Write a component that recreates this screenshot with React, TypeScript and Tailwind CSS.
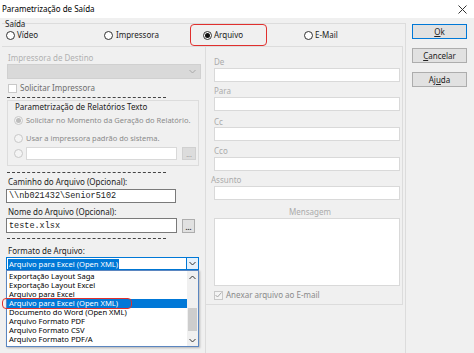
import React from "react";

const FORMATS = [
  "Exportação Layout Saga",
  "Exportação Layout Excel",
  "Arquivo para Excel",
  "Arquivo para Excel (Open XML)",
  "Documento do Word (Open XML)",
  "Arquivo Formato PDF",
  "Arquivo Formato CSV",
  "Arquivo Formato PDF/A",
];

function Radio({ checked, disabled }: { checked?: boolean; disabled?: boolean }) {
  return (
    <span
      className={`w-[9px] h-[9px] rounded-full border flex items-center justify-center shrink-0 ${
        disabled ? "border-[#c8c8c8] bg-[#f4f4f4]" : "border-[#333] bg-white"
      }`}
    >
      {checked && (
        <span className={`w-[5px] h-[5px] rounded-full ${disabled ? "bg-[#bcbcbc]" : "bg-[#111]"}`} />
      )}
    </span>
  );
}

function Chevron({ up, color = "#333" }: { up?: boolean; color?: string }) {
  return (
    <svg width="7" height="5" viewBox="0 0 7 5">
      <path d={up ? "M0.5 4 L3.5 1 L6.5 4" : "M0.5 1 L3.5 4 L6.5 1"} fill="none" stroke={color} strokeWidth="1" />
    </svg>
  );
}

function Field({ className = "" }: { className?: string }) {
  return <div className={`bg-white border border-[#d9d9d9] ${className}`} />;
}

function Dashed({ className = "" }: { className?: string }) {
  return <div className={`border-t border-dashed border-[#444] w-[159px] ml-[5px] ${className}`} />;
}

export default function App() {
  return (
    <div className="w-[474px] h-[353px] overflow-hidden whitespace-nowrap bg-[#f0f0f0] font-['Noto_Sans',sans-serif] text-[8px] leading-[10px] text-[#222]">
      {/* title bar */}
      <div className="h-[18px] bg-white flex items-center justify-between pl-[2px] pr-[7px]">
        <span className="text-[8px] text-black">Parametrização de Saída</span>
        <svg width="9" height="9" viewBox="0 0 9 9">
          <path d="M0.5 0.5 L8.5 8.5 M8.5 0.5 L0.5 8.5" stroke="#333" strokeWidth="1" />
        </svg>
      </div>

      <div className="flex">
        {/* Saída group */}
        <div className="ml-[2px] w-[404px] h-[335px] mt-[5px] border-t border-r border-[#dcdcdc] flex flex-col">
          <div className="ml-[3px] -mt-[5px] h-[10px] text-[#222]">Saída</div>
          <div className="flex items-center h-[12px] pl-[4px]">
            <div className="w-[98px] flex items-center gap-[2px]">
              <Radio /> Vídeo
            </div>
            <div className="w-[99px] flex items-center gap-[3px]">
              <Radio /> Impressora
            </div>
            <div className="w-[101px] relative flex items-center gap-[2px]">
              <span className="absolute -left-[13px] -top-[6px] w-[77px] h-[22px] border-[1.5px] border-[#e0302e] rounded-[4px]" />
              <Radio checked /> Arquivo
            </div>
            <div className="flex items-center gap-[2px]">
              <Radio /> E-Mail
            </div>
          </div>

          <div className="flex mt-[5px] flex-1">
            {/* left panel */}
            <div className="w-[203px] border-t border-[#dcdcdc] flex flex-col">
              <div className="ml-[6px] mt-[6px] text-[#b0b0b0]">Impressora de Destino</div>
              <div className="ml-[5px] mt-[1px] w-[194px] h-[15px] bg-[#d9d9d9] border border-[#d0d0d0] flex items-center justify-end pr-[4px]">
                <Chevron color="#a8a8a8" />
              </div>
              <div className="ml-[6px] mt-[4px] flex items-center gap-[3px] text-[#6e6e6e]">
                <span className="w-[9px] h-[9px] bg-white border border-[#c8c8c8]" />
                Solicitar Impressora
              </div>
              <Dashed className="mt-[4px]" />

              <div className="ml-[5px] mt-[2px] w-[192px] border border-[#dcdcdc] flex flex-col pb-[5px]">
                <div className="ml-[7px] mt-[1px] text-[#222]">Parametrização de Relatórios Texto</div>
                <div className="ml-[6px] mt-[3px] flex items-center gap-[3px] text-[#8a8a8a] text-[7.5px]">
                  <Radio checked disabled /> Solicitar no Momento da Geração do Relatório.
                </div>
                <div className="ml-[6px] mt-[8px] flex items-center gap-[3px] text-[#8a8a8a] text-[7.5px]">
                  <Radio disabled /> Usar a impressora padrão do sistema.
                </div>
                <div className="ml-[6px] mt-[4px] flex items-center gap-[3px]">
                  <Radio disabled />
                  <Field className="w-[151px] h-[13px]" />
                  <div className="ml-[2px] w-[14px] h-[13px] bg-[#dcdcdc] border border-[#d0d0d0] flex items-end justify-center text-[#999] text-[7px] leading-[8px]">
                    ...
                  </div>
                </div>
              </div>

              <Dashed className="mt-[6px]" />
              <div className="ml-[6px] mt-[4px]">Caminho do Arquivo (Opcional):</div>
              <div className="ml-[4px] mt-[2px] w-[170px] h-[14px] bg-white border border-[#7a7a7a] flex items-center pl-[2px] font-['Liberation_Mono',monospace] text-[8.5px] text-[#222]">
                \\nb021432\Senior5102
              </div>
              <div className="ml-[6px] mt-[4px]">Nome do Arquivo (Opcional):</div>
              <div className="ml-[4px] mt-[1px] flex items-center gap-[5px]">
                <div className="w-[171px] h-[15px] bg-white border border-[#7a7a7a] flex items-center pl-[2px] font-['Liberation_Mono',monospace] text-[8.5px] text-[#222]">
                  teste.xlsx
                </div>
                <div className="w-[13px] h-[14px] bg-[#e1e1e1] border border-[#adadad] flex items-end justify-center font-bold text-[7px] leading-[9px]">
                  ...
                </div>
              </div>
              <Dashed className="mt-[5px]" />
              <div className="ml-[6px] mt-[7px]">Formato de Arquivo:</div>

              <div className="ml-[4px] mt-[1px] w-[193px] h-[13px] bg-white border border-[#0078d7] flex items-center pl-[1px] pr-0">
                <span className="bg-[#0078d7] text-white px-[1px] leading-[10px] text-[7.6px]">Arquivo para Excel (Open XML)</span>
                <span className="ml-auto w-[12px] h-[11px] bg-[#e5f1fb] border-l border-[#0078d7] flex items-center justify-center">
                  <Chevron />
                </span>
              </div>
              <div className="ml-[4px] w-[193px] h-[77px] bg-white border border-[#5b86c0] shadow-[1px_1px_2px_rgba(0,0,0,0.25)] flex">
                <div className="flex-1 flex flex-col py-[1px] relative">
                  {FORMATS.map((f, i) => (
                    <div
                      key={f}
                      className={`h-[9px] leading-[9px] pl-[2px] text-[7.6px] ${
                        i === 3 ? "bg-[#0078d7] text-white" : "text-black"
                      }`}
                    >
                      {f}
                    </div>
                  ))}
                  <span className="absolute -left-[5px] top-[27px] w-[130px] h-[11px] border-[1.5px] border-[#e0302e] rounded-[4px]" />
                </div>
                <div className="w-[11px] bg-[#f0f0f0] flex flex-col items-center">
                  <div className="h-[12px] flex items-center">
                    <Chevron up />
                  </div>
                  <div className="mt-[25px] w-[9px] h-[23px] bg-[#cdcdcd]" />
                  <div className="mt-auto h-[12px] flex items-center">
                    <Chevron />
                  </div>
                </div>
              </div>
            </div>

            {/* right panel */}
            <div className="w-[198px] flex flex-col border-l border-[#dcdcdc]">
              <div className="h-[259px] border-t border-b border-r border-[#dcdcdc] flex flex-col">
                <div className="ml-[8px] mt-[10px] text-[#ababab]">De</div>
                <Field className="ml-[8px] mt-[1px] w-[186px] h-[14px]" />
                <div className="ml-[8px] mt-[4px] text-[#ababab]">Para</div>
                <Field className="ml-[8px] mt-[1px] w-[186px] h-[14px]" />
                <div className="ml-[8px] mt-[6px] text-[#ababab]">Cc</div>
                <Field className="ml-[8px] w-[186px] h-[14px]" />
                <div className="ml-[8px] mt-[5px] text-[#ababab]">Cco</div>
                <Field className="ml-[8px] mt-[1px] w-[186px] h-[14px]" />
                <div className="ml-[5px] mt-[4px] text-[#ababab]">Assunto</div>
                <Field className="ml-[8px] mt-[1px] w-[186px] h-[14px]" />
                <div className="mt-[7px] text-center pl-[12px] text-[#ababab]">Mensagem</div>
                <Field className="ml-[8px] mt-[1px] w-[186px] h-[68px]" />
                <div className="ml-[8px] mt-[4px] flex items-center gap-[3px] text-[#8a8a8a]">
                  <span className="w-[9px] h-[9px] border border-[#c8c8c8] bg-[#f4f4f4] flex items-center justify-center">
                    <svg width="7" height="6" viewBox="0 0 7 6">
                      <path d="M0.5 3 L2.5 5 L6.5 0.5" fill="none" stroke="#a8a8a8" strokeWidth="1" />
                    </svg>
                  </span>
                  Anexar arquivo ao E-mail
                </div>
              </div>
            </div>
          </div>
        </div>

        {/* buttons */}
        <div className="ml-[6px] pt-[6px] flex flex-col gap-[9px]">
          <button className="w-[55px] h-[15px] bg-[#e1e1e1] border border-[#0078d7] text-[8px] leading-[10px] text-[#222]">
            <span className="underline">O</span>k
          </button>
          <button className="w-[55px] h-[15px] bg-[#e1e1e1] border border-[#adadad] text-[8px] leading-[10px] text-[#222]">
            <span className="underline">C</span>ancelar
          </button>
          <button className="w-[55px] h-[15px] bg-[#e1e1e1] border border-[#adadad] text-[8px] leading-[10px] text-[#222]">
            Aj<span className="underline">u</span>da
          </button>
        </div>
      </div>
    </div>
  );
}
